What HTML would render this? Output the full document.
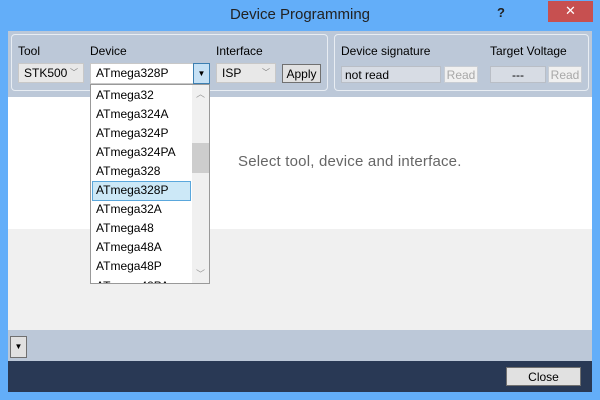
<!DOCTYPE html>
<html><head><style>
*{box-sizing:border-box;margin:0;padding:0}
body{width:600px;height:400px;background:#63aef9;font-family:"Liberation Sans",sans-serif;font-size:12px;color:#000;position:relative;overflow:hidden}
.a{position:absolute}
.title{left:0;width:600px;top:6px;text-align:center;font-size:15px;color:#222}
.grp{border:1px solid #e8edf3;border-radius:4px}
.cb{background:#e8e8e8;border:1px solid #c8c8c8;padding:2px 0 0 5px;height:20px}
.cb .ar{position:absolute;right:5px;top:3px;font-size:8px;color:#777}
.ro{background:#d7dce4;border:1px solid #b9bec6;height:17px;padding:1px 0 0 3px}
.btn{background:#f0f0f0;border:1px solid #c8cdd4;color:#a8a8a8;height:17px;text-align:center;padding-top:1px}
.it{left:96px;height:19px;line-height:19px;font-size:12px}
</style></head><body>
<div class="a title">Device Programming</div>
<div class="a" style="left:497px;top:5px;font-weight:bold;font-size:13px;color:#222">?</div>
<div class="a" style="left:548px;top:1px;width:45px;height:21px;background:#c75050;color:#fff;text-align:center;font-size:13px;line-height:20px">✕</div>
<div class="a" style="left:8px;top:31px;width:584px;height:361px;background:#f0f0f0"></div>
<div class="a" style="left:8px;top:31px;width:584px;height:66px;background:#bcc8d8"></div>
<div class="a" style="left:8px;top:97px;width:584px;height:132px;background:#fff"></div>
<div class="a" style="left:8px;top:330px;width:584px;height:31px;background:#bcc8d8"></div>
<div class="a" style="left:8px;top:361px;width:584px;height:31px;background:#293955"></div>
<div class="a grp" style="left:11px;top:34px;width:317px;height:57px"></div>
<div class="a grp" style="left:334px;top:34px;width:255px;height:57px"></div>
<div class="a" style="left:18px;top:44px">Tool</div>
<div class="a" style="left:90px;top:44px">Device</div>
<div class="a" style="left:216px;top:44px">Interface</div>
<div class="a" style="left:341px;top:44px">Device signature</div>
<div class="a" style="left:490px;top:44px">Target Voltage</div>
<div class="a cb" style="left:18px;top:63px;width:66px">STK500<span class="ar">﹀</span></div>
<div class="a" style="left:90px;top:63px;width:120px;height:21px;background:#fff;border:1px solid #c8c8c8;padding:2px 0 0 5px">ATmega328P</div>
<div class="a" style="left:193px;top:63px;width:17px;height:21px;background:#c6e1f5;border:1px solid #3c7fb1;font-size:8px;text-align:center;line-height:19px">▼</div>
<div class="a cb" style="left:216px;top:63px;width:60px">ISP<span class="ar">﹀</span></div>
<div class="a" style="left:282px;top:64px;width:39px;height:19px;background:#e1e1e1;border:1px solid #707070;text-align:center;padding-top:2px">Apply</div>
<div class="a ro" style="left:341px;top:66px;width:100px">not read</div>
<div class="a btn" style="left:444px;top:66px;width:34px">Read</div>
<div class="a ro" style="left:490px;top:66px;width:56px;text-align:center;padding-left:0">---</div>
<div class="a btn" style="left:548px;top:66px;width:34px">Read</div>
<div class="a" style="left:238px;top:153px;font-size:15px;letter-spacing:0.2px;color:#666">Select tool, device and interface.</div>
<div class="a" style="left:90px;top:84px;width:120px;height:200px;background:#fff;border:1px solid #999;overflow:hidden">
<div class="a" style="left:101px;top:0;width:18px;height:200px;background:#f0f0f0"></div>
<div class="a" style="left:101px;top:58px;width:17px;height:30px;background:#cdcdcd"></div>
<div class="a" style="left:105px;top:2px;font-size:9px;color:#999">︿</div>
<div class="a" style="left:105px;top:182px;font-size:9px;color:#999">﹀</div>
<div class="a" style="left:1px;top:96px;width:99px;height:20px;background:#cce8f7;border:1px solid #5aa7dc"></div>
<div class="a" style="left:5px;top:192px;font-size:12px;line-height:19px">ATmega48PA</div>
</div>
<div class="a it" style="top:86px">ATmega32</div>
<div class="a it" style="top:105px">ATmega324A</div>
<div class="a it" style="top:124px">ATmega324P</div>
<div class="a it" style="top:143px">ATmega324PA</div>
<div class="a it" style="top:162px">ATmega328</div>
<div class="a it" style="top:181px">ATmega328P</div>
<div class="a it" style="top:200px">ATmega32A</div>
<div class="a it" style="top:219px">ATmega48</div>
<div class="a it" style="top:238px">ATmega48A</div>
<div class="a it" style="top:257px">ATmega48P</div>
<div class="a" style="left:10px;top:336px;width:17px;height:22px;background:#e1e1e1;border:1px solid #707070;font-size:8px;text-align:center;line-height:20px">▼</div>
<div class="a" style="left:506px;top:367px;width:75px;height:19px;background:#e1e1e1;border:1px solid #707070;text-align:center;padding-top:2px">Close</div>
</body></html>
